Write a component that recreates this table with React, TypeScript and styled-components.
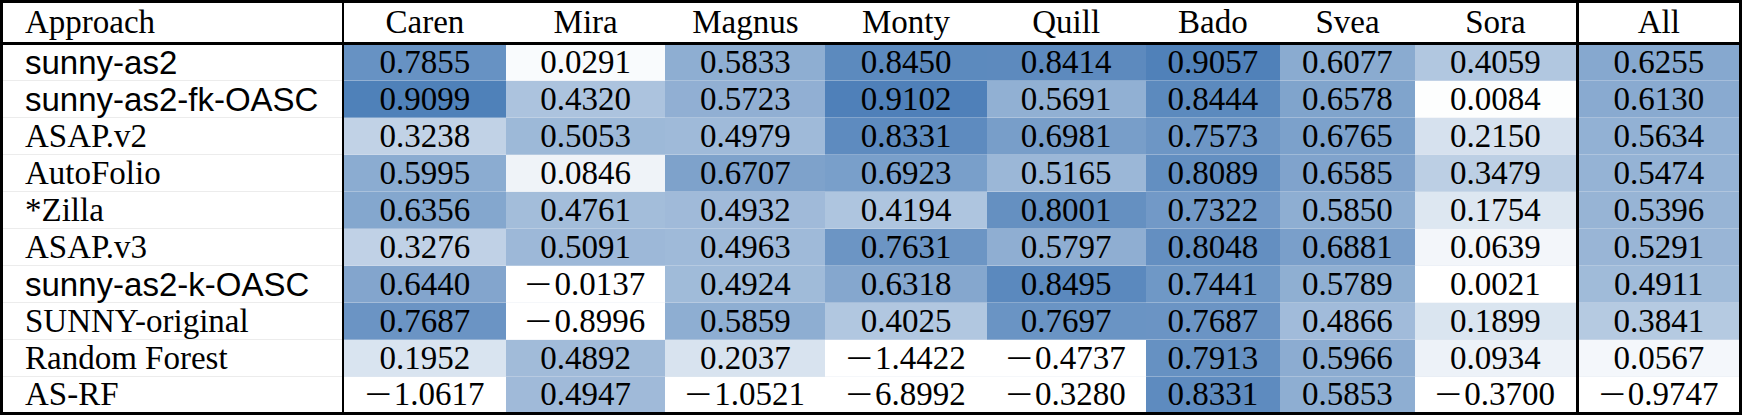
import styled, { createGlobalStyle } from 'styled-components';

// GLOBAL
const GlobalStyle = createGlobalStyle`
  html, body {
    margin: 0;
    padding: 0;
    background: #ffffff;
  }
`;

// STYLES
const Table = styled.table`
  width: 1742px;
  table-layout: fixed;
  border-collapse: collapse;
  border: 3px solid #000;
  font-family: 'Liberation Serif', 'Times New Roman', serif;
  font-size: 33px;
  color: #000;
`;

const HeadCell = styled.th<{ $first?: boolean; $last?: boolean }>`
  height: 39px;
  padding: 0;
  font-weight: 400;
  text-align: ${(p) => (p.$first ? 'left' : 'center')};
  padding-left: ${(p) => (p.$first ? '22px' : '0')};
  border-bottom: 3px solid #000;
  border-right: ${(p) => (p.$first ? '2px solid #000' : 'none')};
  border-left: ${(p) => (p.$last ? '3px solid #000' : 'none')};
  line-height: 1;
  vertical-align: middle;
`;

const Row = styled.tr`
  height: 37px;
`;

const NameCell = styled.td<{ $sans?: boolean }>`
  padding: 0 0 0 22px;
  border-right: 2px solid #000;
  border-bottom: 1px solid #ececec;
  white-space: nowrap;
  line-height: 1;
  font-family: ${(p) =>
    p.$sans
      ? "'Liberation Sans', Arial, sans-serif"
      : "'Liberation Serif', 'Times New Roman', serif"};
`;

const ValueCell = styled.td<{ $level: number; $last?: boolean }>`
  padding: 0;
  text-align: center;
  line-height: 1;
  white-space: nowrap;
  border-bottom: 1px solid rgba(225, 232, 240, 0.35);
  border-left: ${(p) => (p.$last ? '3px solid #000' : 'none')};
  background-color: ${(p) => {
    const t = Math.max(0, Math.min(1, p.$level));
    const mix = (end: number) => Math.round(255 - t * (255 - end));
    return `rgb(${mix(62)}, ${mix(116)}, ${mix(178)})`;
  }};
`;

const Minus = styled.span`
  display: inline-block;
  margin: 0 0.2em 0 0.1em;
  transform: scaleX(1.45);
`;

// DATA
const columns = ['Caren', 'Mira', 'Magnus', 'Monty', 'Quill', 'Bado', 'Svea', 'Sora', 'All'];
const widths = [341, 163, 159, 160, 161, 159, 134, 135, 162, 163];

const rows: { name: string; sans?: boolean; values: number[] }[] = [
  { name: 'sunny-as2', sans: true, values: [0.7855, 0.0291, 0.5833, 0.845, 0.8414, 0.9057, 0.6077, 0.4059, 0.6255] },
  { name: 'sunny-as2-fk-OASC', sans: true, values: [0.9099, 0.432, 0.5723, 0.9102, 0.5691, 0.8444, 0.6578, 0.0084, 0.613] },
  { name: 'ASAP.v2', values: [0.3238, 0.5053, 0.4979, 0.8331, 0.6981, 0.7573, 0.6765, 0.215, 0.5634] },
  { name: 'AutoFolio', values: [0.5995, 0.0846, 0.6707, 0.6923, 0.5165, 0.8089, 0.6585, 0.3479, 0.5474] },
  { name: '*Zilla', values: [0.6356, 0.4761, 0.4932, 0.4194, 0.8001, 0.7322, 0.585, 0.1754, 0.5396] },
  { name: 'ASAP.v3', values: [0.3276, 0.5091, 0.4963, 0.7631, 0.5797, 0.8048, 0.6881, 0.0639, 0.5291] },
  { name: 'sunny-as2-k-OASC', sans: true, values: [0.644, -0.0137, 0.4924, 0.6318, 0.8495, 0.7441, 0.5789, 0.0021, 0.4911] },
  { name: 'SUNNY-original', values: [0.7687, -0.8996, 0.5859, 0.4025, 0.7697, 0.7687, 0.4866, 0.1899, 0.3841] },
  { name: 'Random Forest', values: [0.1952, 0.4892, 0.2037, -1.4422, -0.4737, 0.7913, 0.5966, 0.0934, 0.0567] },
  { name: 'AS-RF', values: [-1.0617, 0.4947, -1.0521, -6.8992, -0.328, 0.8331, 0.5853, -0.37, -0.9747] },
];

function Value({ v }: { v: number }) {
  const text = Math.abs(v).toFixed(4);
  return (
    <>
      {v < 0 && <Minus>−</Minus>}
      {text}
    </>
  );
}

export default function App() {
  return (
    <>
      <GlobalStyle />
      <Table>
        <colgroup>
          {widths.map((w, i) => (
            <col key={i} style={{ width: w }} />
          ))}
        </colgroup>
        <thead>
          <tr>
            <HeadCell $first>Approach</HeadCell>
            {columns.map((c, i) => (
              <HeadCell key={c} $last={i === columns.length - 1}>
                {c}
              </HeadCell>
            ))}
          </tr>
        </thead>
        <tbody>
          {rows.map((r) => (
            <Row key={r.name}>
              <NameCell $sans={r.sans}>{r.name}</NameCell>
              {r.values.map((v, i) => (
                <ValueCell key={i} $level={v} $last={i === r.values.length - 1}>
                  <Value v={v} />
                </ValueCell>
              ))}
            </Row>
          ))}
        </tbody>
      </Table>
    </>
  );
}
